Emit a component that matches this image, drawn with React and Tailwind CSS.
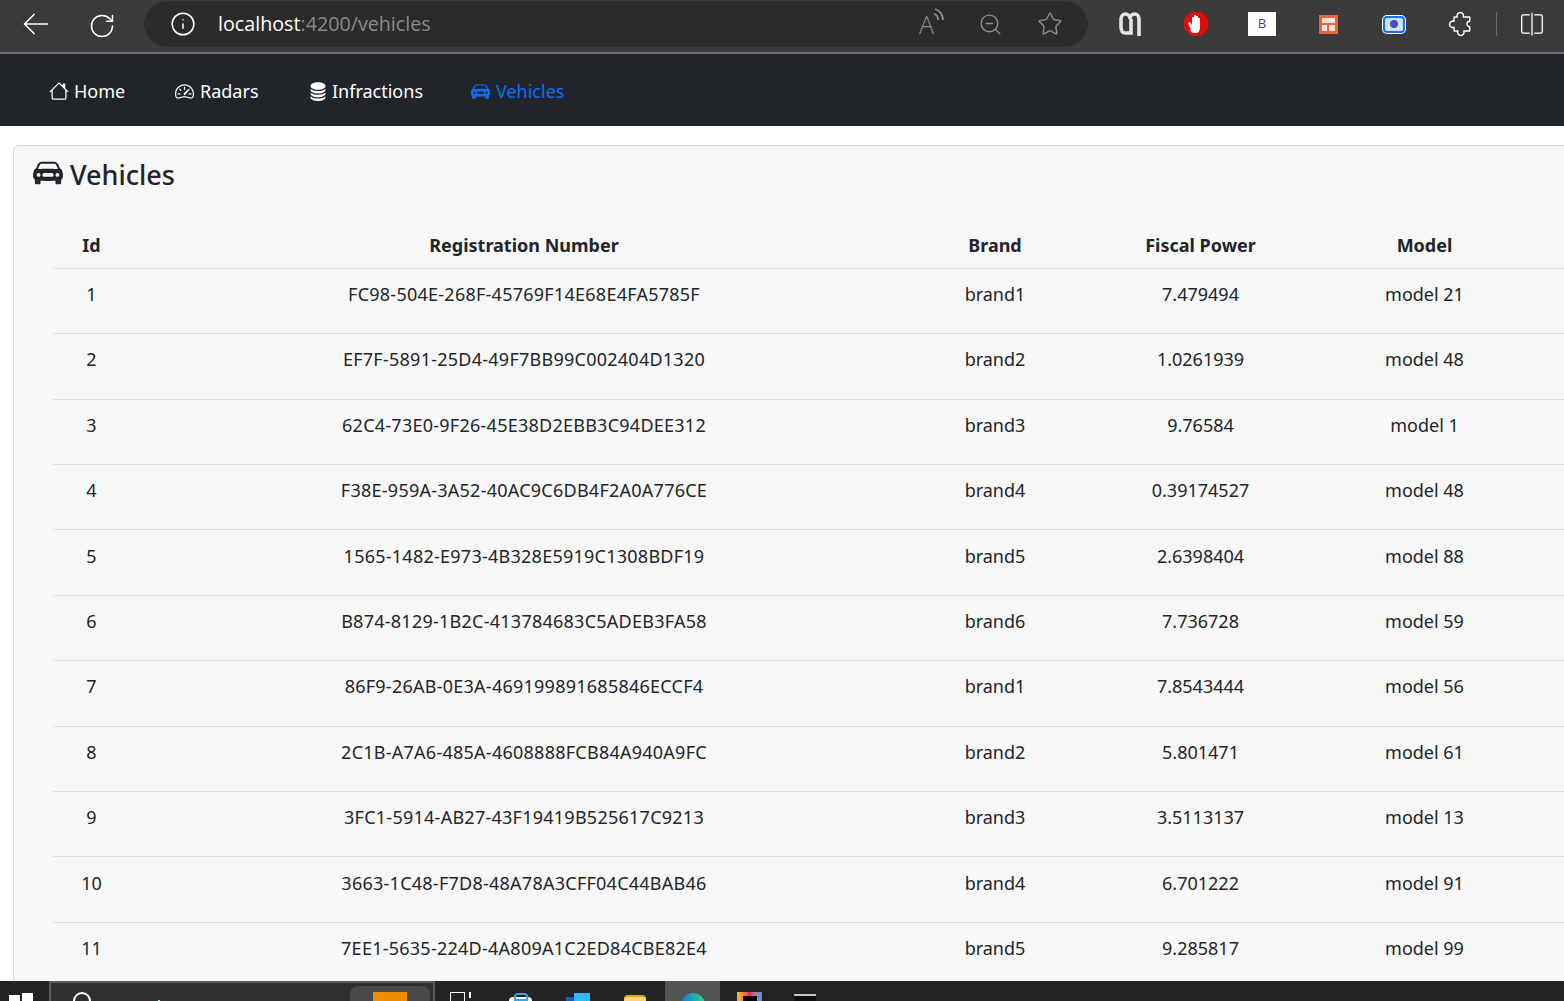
import React from "react";
import { BsHouse, BsSpeedometer2, BsDatabaseFill, BsCarFrontFill } from "react-icons/bs";
import { RotateCw, Info, ZoomOut, Star } from "lucide-react";

const vehicles = [
  [1, "FC98-504E-268F-45769F14E68E4FA5785F", "brand1", "7.479494", "model 21"],
  [2, "EF7F-5891-25D4-49F7BB99C002404D1320", "brand2", "1.0261939", "model 48"],
  [3, "62C4-73E0-9F26-45E38D2EBB3C94DEE312", "brand3", "9.76584", "model 1"],
  [4, "F38E-959A-3A52-40AC9C6DB4F2A0A776CE", "brand4", "0.39174527", "model 48"],
  [5, "1565-1482-E973-4B328E5919C1308BDF19", "brand5", "2.6398404", "model 88"],
  [6, "B874-8129-1B2C-413784683C5ADEB3FA58", "brand6", "7.736728", "model 59"],
  [7, "86F9-26AB-0E3A-469199891685846ECCF4", "brand1", "7.8543444", "model 56"],
  [8, "2C1B-A7A6-485A-4608888FCB84A940A9FC", "brand2", "5.801471", "model 61"],
  [9, "3FC1-5914-AB27-43F19419B525617C9213", "brand3", "3.5113137", "model 13"],
  [10, "3663-1C48-F7D8-48A78A3CFF04C44BAB46", "brand4", "6.701222", "model 91"],
  [11, "7EE1-5635-224D-4A809A1C2ED84CBE82E4", "brand5", "9.285817", "model 99"],
];

const BrowserBar = () => (
  <div className="h-[54px] shrink-0 flex items-center bg-[#3b3b3b] border-b-2 border-[#6e6e6e]">
    <div className="w-[72px] flex justify-center -mt-1">
      <svg viewBox="0 0 26 22" className="w-[26px] h-[22px]" fill="none" stroke="#fff" strokeWidth="1.500">
        <path d="M25 11H1.500M11.500 1 1.500 11l10 10" />
      </svg>
    </div>
    <div className="w-[60px] flex justify-center">
      <RotateCw size={28} strokeWidth={1.3} className="text-white" />
    </div>
    <div className="ml-3 w-[944px] h-[46px] rounded-full bg-[#2b2b2b] flex items-center -mt-1">
      <Info size={26} strokeWidth={1.4} className="ml-[26px] text-white" />
      <span className="ml-[22px] text-[19.7px] text-white font-['Open_Sans',sans-serif]">
        localhost<span className="text-[#8a8a8a]">:4200/vehicles</span>
      </span>
      <div className="ml-auto flex items-center gap-[34px] pr-[25px] text-[#8f8f8f]">
        <div className="relative w-[26px] h-[26px]">
          <span className="absolute left-[1px] top-0 text-[25px] leading-[26px] font-['Open_Sans',sans-serif] font-light">A</span>
          <svg viewBox="0 0 12 14" className="absolute right-[-1px] top-[-3px] w-[12px] h-[14px]" fill="none" stroke="currentColor" strokeWidth="1.800">
            <path d="M1 6c2 .5 4 2.500 4 6M2 1c4 1 8 5 8 11" />
          </svg>
        </div>
        <ZoomOut size={25} strokeWidth={1.3} />
        <Star size={26} strokeWidth={1.3} />
      </div>
    </div>
    <div className="flex-1 flex items-center pl-[28px] gap-[38px] -mt-1">
      {/* m logo */}
      <svg viewBox="0 0 24 24" className="w-7 h-7 p-0.5" fill="none" stroke="#e4e4e4" strokeWidth="3.600">
        <path d="M3 16V7c0-3 2-5 4.500-5S12 4 12 7c0-3 2-5 4.500-5S21 4 21 7v17M3 15c0 4 2 6 4.500 6H13V7" />
      </svg>
      {/* adblock hand */}
      <svg viewBox="0 0 28 28" className="w-7 h-7">
        <path d="M9 2h10l7 7v10l-7 7H9l-7-7V9z" fill="#e00b0b" />
        <path d="M9 20l-3-7 2-1 2 3V7h2v6V5h2v8V6h2v7V8h2v10c0 3-2 5-4 5h-2c-2 0-3-1-4-3z" fill="#fff" />
      </svg>
      <div className="w-7 h-6 bg-white flex items-center justify-center text-[13px] text-[#3a3fb5] font-['Open_Sans',sans-serif]">B</div>
      <div className="w-7 h-7 flex items-center justify-center">
        <div className="w-[19px] h-[19px] bg-[#e8663d] p-[3px] grid grid-cols-2 grid-rows-[5px_1fr] gap-[2px]">
          <div className="col-span-2 bg-[#f6e3dc]" />
          <div className="bg-[#f6e3dc]" />
          <div className="bg-[#f6e3dc]" />
        </div>
      </div>
      <div className="w-7 h-7 flex items-center justify-center">
        <div className="w-[24px] h-[19px] rounded-[5px] bg-white p-[1px]">
          <div className="w-full h-full rounded-[4px] border-2 border-[#1a6ff0] bg-[#cfe0fb] flex items-center justify-center">
            <div className="w-[8px] h-[8px] rounded-full bg-[#3f51c8]" />
          </div>
        </div>
      </div>
      {/* extensions */}
      <svg viewBox="0 0 24 26" className="w-7 h-7" fill="none" stroke="#fff" strokeWidth="1.300" strokeLinejoin="round">
        <path d="M6.500 10.500V6.500H9.500A3 3 0 1 1 15 6.500H21V10.500A2.500 2.500 0 0 0 21 15.500V19.500H15.500A3 3 0 1 1 10 19.500H6.500V16A3 3 0 1 1 6.500 10.500Z" />
      </svg>
      <div className="flex items-center -ml-4">
        <div className="w-px h-[24px] bg-[#6a6a6a]" />
        <svg viewBox="0 0 24 24" className="ml-[22px] w-[26px] h-[26px]" fill="none" stroke="#fff" strokeWidth="1.200">
          <path d="M10 3.500H4a1.500 1.500 0 0 0-1.500 1.500v14A1.500 1.500 0 0 0 4 20.500h6M14 3.500h6A1.500 1.500 0 0 1 21.500 5v14a1.500 1.500 0 0 1-1.500 1.500h-6M12 1.500v21" />
        </svg>
      </div>
    </div>
  </div>
);

const NavItem = ({ icon, label, active, className }) => (
  <a href="#" className={`flex items-center pt-[2px] text-[18px] ${active ? "text-[#0d6efd]" : "text-white"} ${className}`}>
    {icon}
    <span>{label}</span>
  </a>
);

const Navbar = () => (
  <nav className="h-[72px] shrink-0 bg-[#212529] flex items-center pl-[49px]">
    <NavItem icon={<BsHouse size={20} className="mr-[5px]" />} label="Home" className="w-[126px]" />
    <NavItem icon={<BsSpeedometer2 size={19} className="mr-1.5" />} label="Radars" className="w-[135px]" />
    <NavItem icon={<BsDatabaseFill size={20} className="mr-1" />} label="Infractions" className="w-[163px] -ml-0.5" />
    <NavItem icon={<BsCarFrontFill size={19} className="mr-1.5" />} label="Vehicles" active />
  </nav>
);

const VehiclesCard = () => (
  <div className="ml-[13px] -mr-6 mt-[19px] rounded-t-md border border-[#d9d9d9] bg-[#f7f7f7] text-[#212529]">
    <h2 className="h-[83.35px] pl-[19px] pt-[9px] flex items-start gap-[7px] text-[27px] leading-[40px] font-medium">
      <BsCarFrontFill size={30} className="mt-[3px]" />
      Vehicles
    </h2>
    <table className="ml-[39px] w-[1567px] table-fixed border-collapse text-center text-[18px]">
      <colgroup>
        <col className="w-[77px]" />
        <col className="w-[788px]" />
        <col className="w-[154px]" />
        <col className="w-[257px]" />
        <col className="w-[191px]" />
        <col className="w-[100px]" />
      </colgroup>
      <thead>
        <tr className="h-[39px] border-b border-[#dedfe0]">
          <th className="font-bold align-top pt-[3px]">Id</th>
          <th className="font-bold align-top pt-[3px]">Registration Number</th>
          <th className="font-bold align-top pt-[3px]">Brand</th>
          <th className="font-bold align-top pt-[3px]">Fiscal Power</th>
          <th className="font-bold align-top pt-[3px]">Model</th>
          <th />
        </tr>
      </thead>
      <tbody>
        {vehicles.map((v) => (
          <tr key={v[0]} className="h-[65.4px] border-b border-[#dedfe0]">
            <td className="align-top pt-[12.2px]">{v[0]}</td>
            <td className="align-top pt-[12.2px] tracking-[0.25px]">{v[1]}</td>
            <td className="align-top pt-[12.2px]">{v[2]}</td>
            <td className="align-top pt-[12.2px]">{v[3]}</td>
            <td className="align-top pt-[12.2px]">{v[4]}</td>
            <td />
          </tr>
        ))}
      </tbody>
    </table>
  </div>
);

const Taskbar = () => (
  <div className="h-5 shrink-0 bg-[#212324] flex items-start overflow-hidden">
    <div className="w-[49px] h-full pl-[9px] pt-[12px]">
      <div className="w-6 h-3 grid grid-cols-2 gap-[2px]">
        <div className="bg-white mt-[2px]" />
        <div className="bg-white" />
      </div>
    </div>
    <div className="w-[386px] h-full border-t-2 border-x-2 border-[#5a5a5a] bg-[#2f2f2f] flex pl-[22px] pt-[9px] text-white relative">
      <div className="w-[18px] h-[18px] rounded-full border-2 border-white" />
      <span className="ml-[17px] mt-px text-[19px] font-['Open_Sans',sans-serif]">Search</span>
      <div className="absolute left-[299px] top-[3px] w-[80px] h-5 rounded-t-lg bg-[#4a4a4a] flex justify-center pt-[6px]">
        <div className="w-[34px] h-5 bg-[#ef8c00]" />
      </div>
    </div>
    <div className="flex items-start pl-[15px]">
      <div className="w-[24px] pt-[11px] flex gap-1">
        <div className="w-[15px] h-5 border-x border-t border-white" />
        <div className="w-[2px] h-[6px] bg-white" />
      </div>
      <div className="ml-[35px] pt-[16px] relative">
        <div className="absolute left-[5px] top-[12px] w-[14px] h-[8px] rounded-t-sm border-2 border-[#2ea8e6]" />
        <div className="w-[23px] h-5 rounded-t-sm bg-white" />
      </div>
      <div className="ml-[34px] pt-[12px] flex">
        <div className="w-[8px] h-5 mt-[4px] bg-[#0f62b8]" />
        <div className="w-[16px] h-5 bg-[#38b6f2]" />
      </div>
      <div className="ml-[34px] pt-[14px]">
        <div className="w-[22px] h-5 rounded-t-sm bg-[#f8d775] border-t-2 border-[#e0a30e]" />
      </div>
      <div className="ml-[19px] w-[55px] h-5 bg-[#545454] flex justify-center pt-3">
        <div className="w-6 h-6 rounded-full bg-gradient-to-r from-[#1a75d2] to-[#3ccf8e]" />
      </div>
      <div className="ml-[17px] pt-[11px] relative">
        <div className="w-[25px] h-5 bg-gradient-to-r from-[#f5c02b] via-[#e5255f] to-[#1e9be5]" />
        <div className="absolute left-[6px] top-[15px] w-[14px] h-5 bg-black" />
      </div>
      <div className="ml-[32px] pt-[13px]">
        <div className="w-[22px] h-5 bg-[#111] border-t-2 border-[#c8c8c8]" />
      </div>
    </div>
  </div>
);

export default function App() {
  return (
    <div className="h-screen flex flex-col overflow-hidden bg-white font-['Noto_Sans','Open_Sans',sans-serif]">
      <BrowserBar />
      <Navbar />
      <div className="flex-1 min-h-0 overflow-hidden">
        <VehiclesCard />
      </div>
      <Taskbar />
    </div>
  );
}
